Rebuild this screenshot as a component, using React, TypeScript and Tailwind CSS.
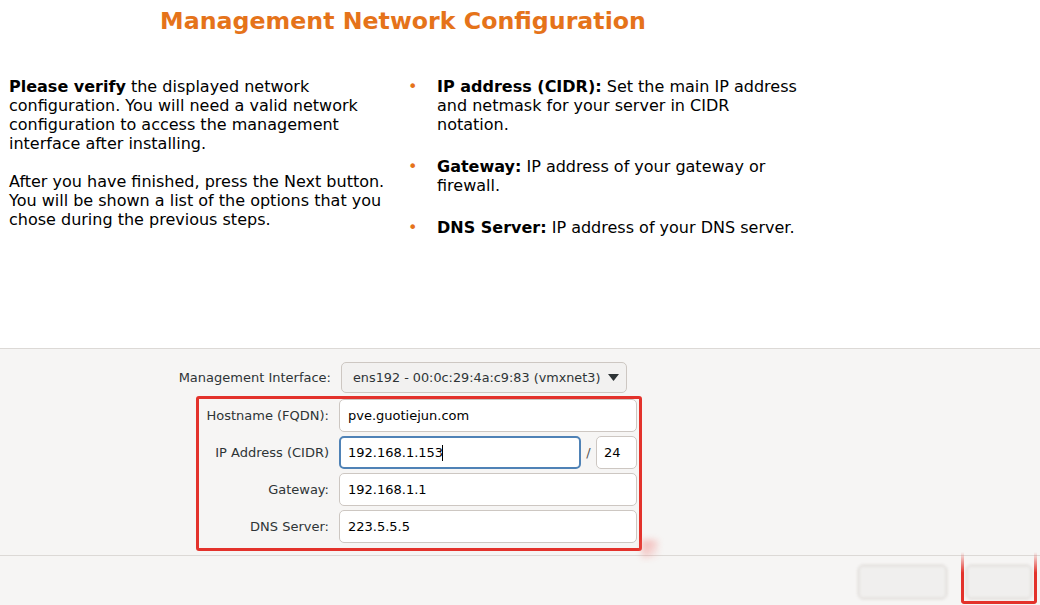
import { useState } from "react";

const bullets = [
  { term: "IP address (CIDR):", text: "Set the main IP address and netmask for your server in CIDR notation." },
  { term: "Gateway:", text: "IP address of your gateway or firewall." },
  { term: "DNS Server:", text: "IP address of your DNS server." },
];

function Field({ label, children }: { label: string; children: React.ReactNode }) {
  return (
    <div className="flex h-[33px] items-center">
      <div className="w-[330px] pr-[1px] text-right text-[13px] text-[#2e3436]">{label}</div>
      <div className="ml-[9px] flex w-[298px] items-center">{children}</div>
    </div>
  );
}

export default function App() {
  const [hostname, setHostname] = useState("pve.guotiejun.com");
  const [ip, setIp] = useState("192.168.1.153");
  const [cidr, setCidr] = useState("24");
  const [gateway, setGateway] = useState("192.168.1.1");
  const [dns, setDns] = useState("223.5.5.5");

  const inputCls =
    "h-[33px] w-full rounded-[5px] border border-[#cdc7c2] bg-white px-[8px] text-[13px] text-black outline-none";

  return (
    <div className="relative h-[605px] w-[1040px] overflow-hidden bg-[#f6f5f4] font-['DejaVu_Sans',sans-serif]">
      {/* top info panel */}
      <div className="h-[349px] border-b border-[#dcd9d6] bg-white">
        <h1 className="w-[806px] pt-[6px] text-center text-[23.7px] font-bold leading-[30px] text-[#e5731a]">
          Management Network Configuration
        </h1>
        <div className="mt-[41px] flex text-[16px] leading-[19px] text-black">
          <div className="w-[400px] pl-[9px] pr-[10px]">
            <p>
              <b>Please verify</b> the displayed network configuration. You will need a valid network
              configuration to access the management interface after installing.
            </p>
            <p className="mt-[19px]">
              After you have finished, press the Next button. You will be shown a list of the options
              that you chose during the previous steps.
            </p>
          </div>
          <ul className="flex w-[400px] flex-col gap-[23px] pl-[6px]">
            {bullets.map((b) => (
              <li key={b.term} className="flex">
                <span className="w-[31px] shrink-0 pl-[2px] text-[#e5731a]">•</span>
                <span className="w-[364px]">
                  <b>{b.term}</b> {b.text}
                </span>
              </li>
            ))}
          </ul>
        </div>
      </div>

      {/* form */}
      <div className="flex h-[207px] flex-col border-b border-[#dcd9d6] pt-[13px]">
        <div className="flex h-[31px] items-center">
          <div className="w-[331px] text-right text-[13px] text-[#2e3436]">Management Interface:</div>
          <button className="ml-[10px] flex h-[31px] w-[286px] items-center gap-[8px] rounded-[5px] border border-[#cdc7c2] bg-[#f2f1f0] pl-[11px] text-[12.8px] text-[#2e3436]">
            <span>ens192 - 00:0c:29:4a:c9:83 (vmxnet3)</span>
            <svg width="11" height="7" viewBox="0 0 11 7">
              <path d="M0 0h11L5.5 7z" fill="#2e3436" />
            </svg>
          </button>
        </div>
        <div className="mt-[6px] flex flex-col gap-[4px]">
          <Field label="Hostname (FQDN):">
            <input className={inputCls} value={hostname} onChange={(e) => setHostname(e.target.value)} />
          </Field>
          <Field label="IP Address (CIDR)">
            <div className="relative flex h-[33px] w-[242px] items-center rounded-[5px] border-2 border-[#4f82b6] bg-white px-[7px] text-[13px] text-black">
              <input
                className="h-full w-full bg-transparent outline-none"
                value={ip}
                onChange={(e) => setIp(e.target.value)}
              />
              <span className="pointer-events-none absolute left-[101px] top-[7px] h-[16px] w-px bg-black" />
            </div>
            <span className="w-[15px] text-center text-[13px] text-[#555]">/</span>
            <input
              className="h-[33px] w-[41px] rounded-[5px] border border-[#cdc7c2] bg-white px-[7px] text-[13px] text-black outline-none"
              value={cidr}
              onChange={(e) => setCidr(e.target.value)}
            />
          </Field>
          <Field label="Gateway:">
            <input className={inputCls} value={gateway} onChange={(e) => setGateway(e.target.value)} />
          </Field>
          <Field label="DNS Server:">
            <input className={inputCls} value={dns} onChange={(e) => setDns(e.target.value)} />
          </Field>
        </div>
      </div>

      {/* footer buttons (blurred) */}
      <div className="flex justify-end gap-[19px] pr-[8px] pt-[9px] blur-[1.5px]">
        <button className="h-[34px] w-[89px] rounded-[5px] border border-[#cdc7c2] bg-[#f0efee]" />
        <button className="h-[34px] w-[66px] rounded-[5px] border border-[#cdc7c2] bg-[#f0efee]" />
      </div>

      {/* red annotation boxes */}
      <div className="pointer-events-none absolute left-[196px] top-[396px] h-[155px] w-[446px] rounded-[3px] border-[3px] border-[#e3322b]" />
      <div className="pointer-events-none absolute left-[642px] top-[540px] h-[18px] w-[16px] bg-gradient-to-br from-[#f07a76] to-transparent opacity-60 blur-[3px]" />
      <div className="pointer-events-none absolute left-[961px] top-[552px] h-[52px] w-[76px] rounded-b-[3px] border-x-[3px] border-b-[3px] border-[#e3322b] blur-[0.6px] [mask-image:linear-gradient(to_bottom,transparent,black_40%)]" />
    </div>
  );
}
